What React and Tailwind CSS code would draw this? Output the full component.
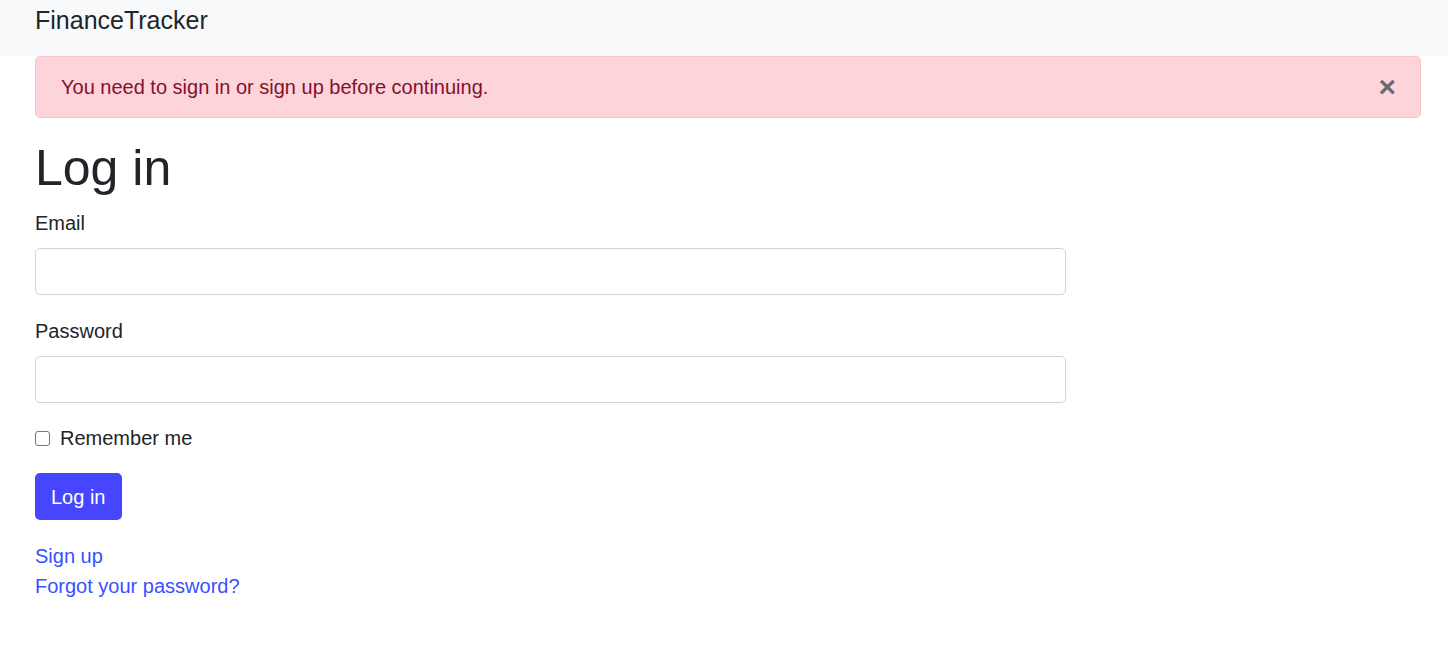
export default function App() {
  return (
    <div className="min-h-screen bg-white text-[#212529] font-['Liberation_Sans',Arial,sans-serif] text-[20px] leading-[30px]">
      {/* Navbar (page is scrolled a bit, so it looks cut at the top) */}
      <nav className="h-[56px] bg-[#f8f9fa] px-[35px]">
        <a href="#" className="block pt-[2px] text-[25px] leading-[37px] text-[#212529]">
          FinanceTracker
        </a>
      </nav>

      <div className="pl-[35px] pr-[27px]">
        {/* Flash alert */}
        <div className="relative flex items-center h-[62px] pl-[25px] pr-[80px] bg-[#fdd4da] border border-[#fbc4cc] rounded-[5px] text-[#85102c]">
          <span>You need to sign in or sign up before continuing.</span>
          <button className="absolute right-[24px] top-[15px] text-[30px] leading-[30px] font-bold text-[#6d6a6d]">
            ×
          </button>
        </div>

        <h1 className="mt-[20px] mb-[10px] text-[50px] leading-[60px] font-normal">Log in</h1>

        <form className="w-[1031px] mb-[21px]">
          <div className="mb-[21px]">
            <label className="block mb-[10px]">Email</label>
            <input type="email" className="block w-full h-[47px] px-[15px] border border-[#ced4da] rounded-[5px] bg-white" />
          </div>
          <div className="mb-[20px]">
            <label className="block mb-[10px]">Password</label>
            <input type="password" className="block w-full h-[47px] px-[15px] border border-[#ced4da] rounded-[5px] bg-white" />
          </div>
          <div className="mb-[20px] flex items-center h-[30px]">
            <input type="checkbox" className="appearance-none w-[15px] h-[15px] border border-[#767676] rounded-[3px] bg-white" />
            <label className="ml-[10px]">Remember me</label>
          </div>
          <button type="button" className="h-[47px] px-[16px] rounded-[5px] bg-[#4646ff] text-white">
            Log in
          </button>
        </form>

        <div className="flex flex-col items-start">
          <a href="#" className="text-[#3a50ff]">Sign up</a>
          <a href="#" className="text-[#3a50ff]">Forgot your password?</a>
        </div>
      </div>
    </div>
  );
}
